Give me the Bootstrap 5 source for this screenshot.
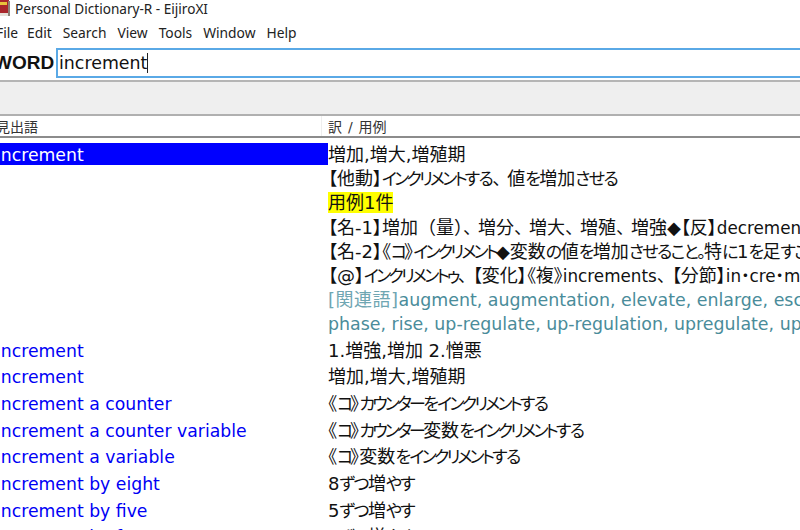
<!DOCTYPE html>
<html lang="ja">
<head>
<meta charset="utf-8">
<title>Personal Dictionary-R - EijiroXI</title>
<link rel="stylesheet" href="https://cdn.jsdelivr.net/npm/bootstrap@5.3.0/dist/css/bootstrap.min.css">
<style>
html,body{height:530px;overflow:hidden;background:#fff}
body{font-family:"DejaVu Sans","Noto Sans CJK JP",sans-serif;color:#111;font-feature-settings:"palt"}
.shell{margin-left:-6px;width:1100px}
.title-bar{height:20px;font:13.6px/17px "Noto Sans","Noto Sans CJK JP",sans-serif;color:#222;gap:5px}
.app-ico{flex:none}
.menu-row{height:26px;font:13.8px/26px "Noto Sans",sans-serif;color:#222;gap:11px;padding-left:2px}
.menu-row span:first-child{margin-right:-2px}
.word-row{height:36px;background:#fff;border-bottom:2px solid #b5b5b5;padding:2px 0}
.word-tag{font:bold 19px/30px "Liberation Sans",sans-serif;color:#111;width:62px;flex:none}
.word-box{height:30px;border:2px solid #5aa9e6;border-radius:0;padding:0 1px;font-size:17.4px;line-height:26px;color:#111;flex:1;display:flex;align-items:center}
.caret-mark{display:inline-block;width:1px;height:20px;background:#222}
.gray-band{height:34px;background:#efefef;border-bottom:2px solid #b0b0b0}
.head-row{height:22px;font:14px/22px "DejaVu Sans","Noto Sans CJK JP",sans-serif;color:#333;border-bottom:2px solid #8c8c8c}
.head-left{width:328px;padding-left:2px;border-right:1px solid #eee;flex:none}
.head-right{padding-left:6px;word-spacing:1.5px}
.list-pane{padding-top:5px}
.entry{display:flex}
.term{width:334px;flex:none;color:#0000f5;font-size:17.25px;padding-left:2px;line-height:24px;white-space:pre}
.term-on{background:#0000ff;color:#fff;height:22px}
.gloss{line-height:24.2px;height:24.2px;white-space:nowrap;font-size:18px;color:#111}
.plain-row{height:26.7px}
.plain-row .term,.plain-row .gloss{line-height:26.7px;height:26.7px}
.first-row{height:194.6px}
.hit-tag{background:#ffff00;display:inline-block;line-height:21px}
.rel{color:#4a8c9a;font-size:17.4px}
.rel-zh{font-size:18px;letter-spacing:.5px;color:#6fa6b2}
.kt{font-size:17px;letter-spacing:-2.8px}
.hg{font-size:17px;letter-spacing:-1.6px}
.pu{font-feature-settings:normal;letter-spacing:-3px}
.fw{font-feature-settings:normal}
.la{font-size:16.8px}
</style>
</head>
<body>
<div class="shell">
  <div class="title-bar d-flex align-items-start">
    <svg class="app-ico" width="16" height="17" viewBox="0 0 16 17">
      <rect x="1" y="0" width="14" height="16" fill="#a9262b"/>
      <rect x="3" y="2" width="10" height="3" fill="#e9c23a"/>
      <rect x="1" y="13" width="14" height="3" fill="#e6e0d8"/>
      <rect x="14" y="1" width="2" height="15" fill="#8a8078"/>
    </svg>
    <span>Personal Dictionary-R - EijiroXI</span>
  </div>
  <nav class="menu-row d-flex">
    <span>File</span><span>Edit</span><span>Search</span><span>View</span><span>Tools</span><span>Window</span><span>Help</span>
  </nav>
  <div class="word-row d-flex">
    <span class="word-tag">WORD</span>
    <div class="form-control word-box">increment<span class="caret-mark"></span></div>
  </div>
  <div class="gray-band"></div>
  <div class="head-row d-flex">
    <div class="head-left">見出語</div>
    <div class="head-right">訳 / 用例</div>
  </div>
  <div class="list-pane">
    <div class="entry first-row">
      <div class="term term-on">increment</div>
      <div>
        <div class="gloss">増加,増大,増殖期</div>
        <div class="gloss">【他動】<span class="kt">インクリメント</span><span class="hg">する</span><span class="pu">、</span>値<span class="hg">を</span>増加<span class="hg">させる</span></div>
        <div class="gloss"><span class="hit-tag">用例1件</span></div>
        <div class="gloss">【名-1】増加<span class="fw">（量）</span><span class="pu">、</span>増分<span class="pu">、</span>増大<span class="pu">、</span>増殖<span class="pu">、</span>増強◆【反】<span class="la">decrement</span></div>
        <div class="gloss">【名-2】《<span class="kt">コ</span>》<span class="kt">インクリメント</span>◆変数<span class="hg">の</span>値<span class="hg">を</span>増加<span class="hg">させること。</span>特<span class="hg">に</span>1<span class="hg">を</span>足<span class="hg">すこと</span></div>
        <div class="gloss">【@】<span class="kt">インクリメントゥ</span><span class="pu">、</span>【変化】《複》<span class="la">increments</span><span class="pu">、</span>【分節】<span class="la">in・cre・ment</span></div>
        <div class="gloss rel"><span class="rel-zh">[関連語]</span>augment, augmentation, elevate, enlarge, escalate</div>
        <div class="gloss rel">phase, rise, up-regulate, up-regulation, upregulate, upregulation</div>
      </div>
    </div>
    <div class="entry plain-row"><div class="term">increment</div><div class="gloss">1.増強,増加 2.憎悪</div></div>
    <div class="entry plain-row"><div class="term">increment</div><div class="gloss">増加,増大,増殖期</div></div>
    <div class="entry plain-row"><div class="term">increment a counter</div><div class="gloss">《<span class="kt">コ</span>》<span class="kt">カウンター</span><span class="hg">を</span><span class="kt">インクリメント</span><span class="hg">する</span></div></div>
    <div class="entry plain-row"><div class="term">increment a counter variable</div><div class="gloss">《<span class="kt">コ</span>》<span class="kt">カウンター</span>変数<span class="hg">を</span><span class="kt">インクリメント</span><span class="hg">する</span></div></div>
    <div class="entry plain-row"><div class="term">increment a variable</div><div class="gloss">《<span class="kt">コ</span>》変数<span class="hg">を</span><span class="kt">インクリメント</span><span class="hg">する</span></div></div>
    <div class="entry plain-row"><div class="term">increment by eight</div><div class="gloss">8<span class="hg">ずつ</span>増<span class="hg">やす</span></div></div>
    <div class="entry plain-row"><div class="term">increment by five</div><div class="gloss">5<span class="hg">ずつ</span>増<span class="hg">やす</span></div></div>
    <div class="entry plain-row"><div class="term">increment by four</div><div class="gloss">4<span class="hg">ずつ</span>増<span class="hg">やす</span></div></div>
  </div>
</div>
<script src="https://cdn.jsdelivr.net/npm/bootstrap@5.3.0/dist/js/bootstrap.bundle.min.js"></script>
</body>
</html>
